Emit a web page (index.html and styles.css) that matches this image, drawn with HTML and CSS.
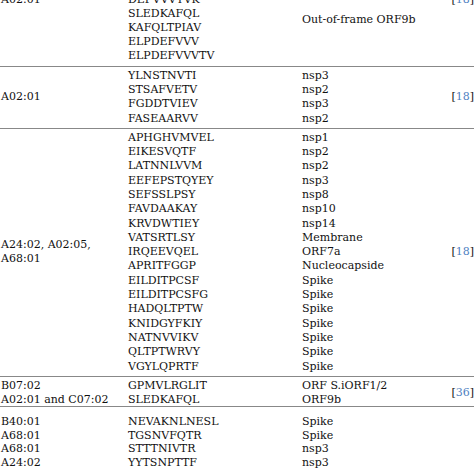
FILE: index.html
```html
<!DOCTYPE html>
<html>
<head>
<meta charset="utf-8">
<link rel="stylesheet" href="styles.css">
</head>
<body>
<div class="table">
  <div class="group g1">
    <div class="cell allele top">A02:01</div>
    <div class="cell list">
      <div>DEFVVVTVK</div>
      <div>SLEDKAFQL</div>
      <div>KAFQLTPIAV</div>
      <div>ELPDEFVVV</div>
      <div>ELPDEFVVVTV</div>
    </div>
    <div class="cell protein-top">Out-of-frame ORF9b</div>
    <div class="cell ref top"><span class="cite">[<span class="num">18</span>]</span></div>
  </div>

  <div class="group g2">
    <div class="cell allele">A02:01</div>
    <div class="cell list">
      <div>YLNSTNVTI</div>
      <div>STSAFVETV</div>
      <div>FGDDTVIEV</div>
      <div>FASEAARVV</div>
    </div>
    <div class="cell list">
      <div>nsp3</div>
      <div>nsp2</div>
      <div>nsp3</div>
      <div>nsp2</div>
    </div>
    <div class="cell ref"><span class="cite">[<span class="num">18</span>]</span></div>
  </div>

  <div class="group g3">
    <div class="cell allele">A24:02, A02:05,<br>A68:01</div>
    <div class="cell list">
      <div>APHGHVMVEL</div>
      <div>EIKESVQTF</div>
      <div>LATNNLVVM</div>
      <div>EEFEPSTQYEY</div>
      <div>SEFSSLPSY</div>
      <div>FAVDAAKAY</div>
      <div>KRVDWTIEY</div>
      <div>VATSRTLSY</div>
      <div>IRQEEVQEL</div>
      <div>APRITFGGP</div>
      <div>EILDITPCSF</div>
      <div>EILDITPCSFG</div>
      <div>HADQLTPTW</div>
      <div>KNIDGYFKIY</div>
      <div>NATNVVIKV</div>
      <div>QLTPTWRVY</div>
      <div>VGYLQPRTF</div>
    </div>
    <div class="cell list">
      <div>nsp1</div>
      <div>nsp2</div>
      <div>nsp2</div>
      <div>nsp3</div>
      <div>nsp8</div>
      <div>nsp10</div>
      <div>nsp14</div>
      <div>Membrane</div>
      <div>ORF7a</div>
      <div>Nucleocapside</div>
      <div>Spike</div>
      <div>Spike</div>
      <div>Spike</div>
      <div>Spike</div>
      <div>Spike</div>
      <div>Spike</div>
      <div>Spike</div>
    </div>
    <div class="cell ref"><span class="cite">[<span class="num">18</span>]</span></div>
  </div>

  <div class="group g4">
    <div class="cell list">
      <div>B07:02</div>
      <div>A02:01 and C07:02</div>
    </div>
    <div class="cell list">
      <div>GPMVLRGLIT</div>
      <div>SLEDKAFQL</div>
    </div>
    <div class="cell list">
      <div>ORF S.iORF1/2</div>
      <div>ORF9b</div>
    </div>
    <div class="cell ref"><span class="cite">[<span class="num">36</span>]</span></div>
  </div>

  <div class="group g5">
    <div class="cell list">
      <div>B40:01</div>
      <div>A68:01</div>
      <div>A68:01</div>
      <div>A24:02</div>
    </div>
    <div class="cell list">
      <div>NEVAKNLNESL</div>
      <div>TGSNVFQTR</div>
      <div>STTTNIVTR</div>
      <div>YYTSNPTTF</div>
    </div>
    <div class="cell list">
      <div>Spike</div>
      <div>Spike</div>
      <div>nsp3</div>
      <div>nsp3</div>
    </div>
    <div class="cell ref"></div>
  </div>
</div>
</body>
</html>
```

FILE: styles.css
```css
html, body {
  margin: 0;
  padding: 0;
  background: #ffffff;
  overflow: hidden;
}

body {
  width: 474px;
  height: 474px;
  font-family: "DejaVu Serif", "Liberation Serif", serif;
  font-size: 11px;
  color: #111111;
}

.table {
  margin-top: -7px;
}

.group {
  display: grid;
  grid-template-columns: 128px 174px 150px 22px;
  line-height: 14.2px;
  border-bottom: 1px solid #888888;
}

.cell {
  display: flex;
  flex-direction: column;
  justify-content: center;
  white-space: nowrap;
}

.cell.allele {
  padding-left: 1px;
}

.group > .cell:first-child.list {
  padding-left: 1px;
}

.cell.top {
  justify-content: flex-start;
}

.cell.protein-top {
  justify-content: flex-start;
  padding-top: 20px;
}

.cell.ref {
  align-items: flex-end;
}

.cite {
  white-space: nowrap;
}

.num {
  color: #4f82c2;
}

.g1 {
  line-height: 14px;
  padding-bottom: 3px;
}

.g2 {
  padding: 2px 0 2px;
}

.g3 {
  line-height: 14.3px;
  padding: 2px 0 2.5px;
}

.g4 {
  line-height: 13.5px;
  padding: 2px 0 0;
}

.g5 {
  line-height: 13.5px;
  padding: 8px 0 0;
  border-bottom: none;
}
```
